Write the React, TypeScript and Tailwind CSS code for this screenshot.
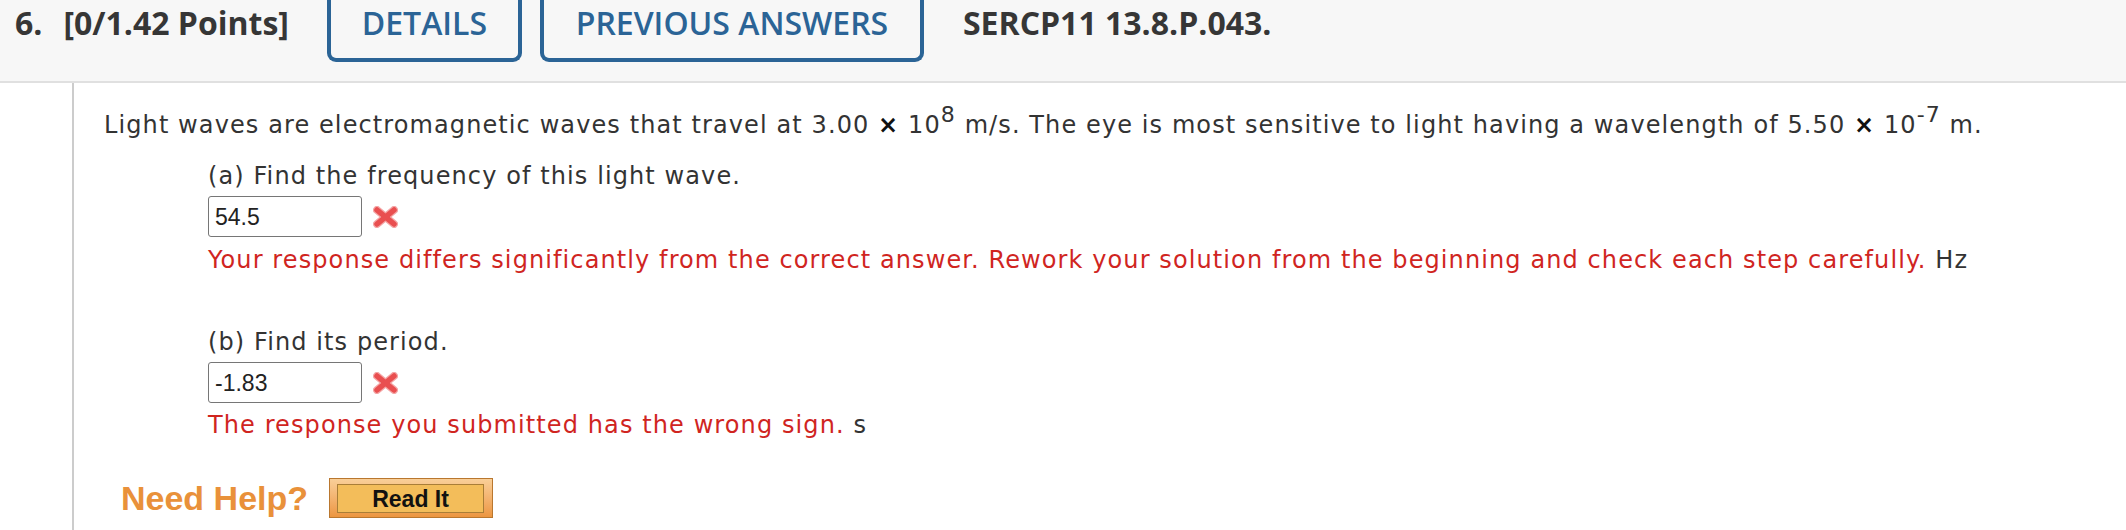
import React from "react";

function WrongMark() {
  return (
    <svg width="25" height="22" viewBox="0 0 25 22" className="ml-[11px] shrink-0">
      <g strokeLinecap="round">
        <line x1="4" y1="4" x2="21" y2="18" stroke="#f4a5a5" strokeWidth="8" />
        <line x1="21" y1="4" x2="4" y2="18" stroke="#f4a5a5" strokeWidth="8" />
        <line x1="4" y1="4" x2="21" y2="18" stroke="#e94f50" strokeWidth="5.5" />
        <line x1="21" y1="4" x2="4" y2="18" stroke="#e94f50" strokeWidth="5.5" />
      </g>
    </svg>
  );
}

function AnswerBox({ value }: { value: string }) {
  return (
    <div className="flex items-center">
      <div className="w-[154px] h-[41px] border-[1.5px] border-[#767676] rounded-[3px] bg-white flex items-center pl-[6px] font-['Liberation_Sans',Arial,sans-serif] text-[23px] tracking-normal text-[#222]">
        {value}
      </div>
      <WrongMark />
    </div>
  );
}

function Sup({ children }: { children: React.ReactNode }) {
  return <sup className="text-[22px] -top-[11px]">{children}</sup>;
}

export default function App() {
  const head = "font-['Open_Sans',sans-serif] text-[32px] leading-[44px]";
  return (
    <div className="w-[2126px] h-[530px] bg-white overflow-hidden">
      <div className="h-[83px] bg-[#f7f7f7] border-b-2 border-[#e0e0e0] flex items-start">
        <div className={`${head} font-bold text-[#363636] mt-[1px] ml-[15px] whitespace-nowrap`}>
          6.<span className="ml-[21px]">[0/1.42 Points]</span>
        </div>
        <button className={`${head} font-semibold text-[#2b6496] ml-[38px] w-[195px] h-[62px] border-x-4 border-b-4 border-[#2b6496] rounded-b-[9px] flex justify-center pt-[1px]`}>
          DETAILS
        </button>
        <button className={`${head} font-semibold text-[#2b6496] ml-[18px] w-[384px] h-[62px] border-x-4 border-b-4 border-[#2b6496] rounded-b-[9px] flex justify-center pt-[1px]`}>
          PREVIOUS ANSWERS
        </button>
        <div className={`${head} font-bold text-[#363636] mt-[1px] ml-[39px] whitespace-nowrap`}>
          SERCP11 13.8.P.043.
        </div>
      </div>

      <div className="ml-[72px] h-[447px] border-l-2 border-[#cccccc] pl-[30px] pt-[28px] font-['DejaVu_Sans',Verdana,sans-serif] text-[24px] tracking-[1.1px] leading-[28px] text-[#333] whitespace-nowrap">
        <p>
          Light waves are electromagnetic waves that travel at 3.00 <b className="text-[#111]">×</b> 10<Sup>8</Sup> m/s. The eye is most
          sensitive to light having a wavelength of 5.50 <b className="text-[#111]">×</b> 10<Sup>-7</Sup> m.
        </p>

        <div className="pl-[104px]">
          <p className="mt-[23px]">(a) Find the frequency of this light wave.</p>
          <div className="mt-[6px]">
            <AnswerBox value="54.5" />
          </div>
          <p className="mt-[9px]">
            <span className="text-[#d0251f]">
              Your response differs significantly from the correct answer. Rework your solution from the beginning and check
              each step carefully.
            </span>{" "}
            Hz
          </p>

          <p className="mt-[54px]">(b) Find its period.</p>
          <div className="mt-[6px]">
            <AnswerBox value="-1.83" />
          </div>
          <p className="mt-[8px]">
            <span className="text-[#d0251f]">The response you submitted has the wrong sign.</span> s
          </p>
        </div>

        <div className="mt-[39px] ml-[17px] flex items-center tracking-normal">
          <span className="font-['Liberation_Sans',Arial,sans-serif] font-bold text-[34px] leading-none text-[#e9913a]">
            Need Help?
          </span>
          <button className="ml-[21px] w-[164px] h-[40px] border border-[#b9772f] bg-gradient-to-b from-[#f9cf98] to-[#ec9640] pt-[5px] pb-[4px] pl-[7px] pr-[8px] flex">
            <span className="flex-1 border border-[#a97e38] bg-[#f3bd5a] flex items-center justify-center font-['Liberation_Sans',Arial,sans-serif] font-bold text-[23px] text-[#111]">
              Read It
            </span>
          </button>
        </div>
      </div>
    </div>
  );
}
